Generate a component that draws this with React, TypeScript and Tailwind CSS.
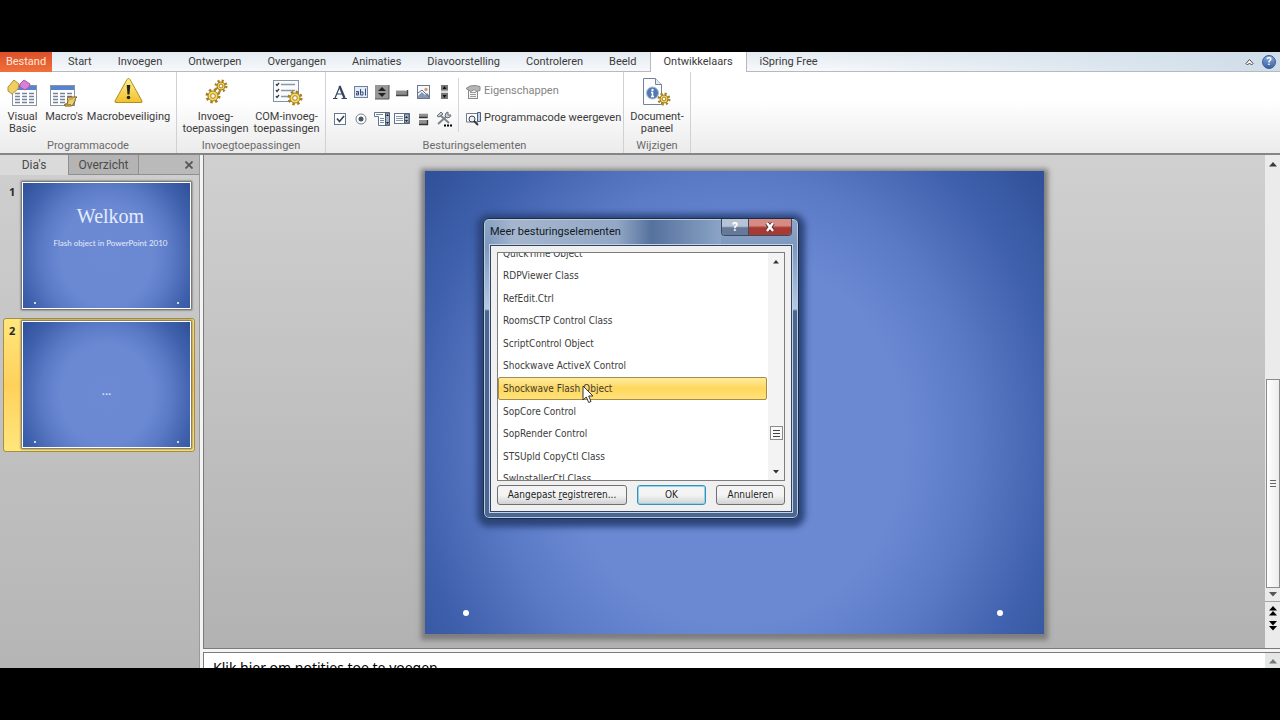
import { useState } from 'react';
import type { ReactNode } from 'react';

const ribbonTabs = [
  'Start',
  'Invoegen',
  'Ontwerpen',
  'Overgangen',
  'Animaties',
  'Diavoorstelling',
  'Controleren',
  'Beeld',
  'Ontwikkelaars',
  'iSpring Free',
];

const controls = [
  'QuickTime Object',
  'RDPViewer Class',
  'RefEdit.Ctrl',
  'RoomsCTP Control Class',
  'ScriptControl Object',
  'Shockwave ActiveX Control',
  'Shockwave Flash Object',
  'SopCore Control',
  'SopRender Control',
  'STSUpld CopyCtl Class',
  'SwInstallerCtl Class',
];

const slideBackground =
  'bg-[radial-gradient(65%_95%_at_50%_58%,#6c8ad4_0%,#6b89d3_42%,#5b7ac6_60%,#3f60ac_80%,#2e4f96_100%)]';

/* ---------- Icons ---------- */

const Gear = ({ x, y, r }: { x: number; y: number; r: number }) => (
  <g transform={`translate(${x} ${y})`}>
    <circle r={r} fill="none" stroke="#a58022" strokeWidth="3" strokeDasharray={`${(r * Math.PI) / 8} ${(r * Math.PI) / 8}`} />
    <circle r={r - 1} fill="#f7da62" stroke="#a58022" strokeWidth="1" />
    <circle r={r / 2.6} fill="#fff" stroke="#a58022" strokeWidth="1" />
  </g>
);

const Sheet = ({ x, y }: { x: number; y: number }) => (
  <g transform={`translate(${x} ${y})`}>
    <rect x="0.5" y="0.5" width="24" height="20" fill="#fff" stroke="#8a95a3" />
    <rect x="1" y="1" width="23" height="4" fill="#5583cf" />
    <path d="M3 8.5h5M10 8.5h5M17 8.5h5M3 11.5h5M10 11.5h5M17 11.5h5M3 14.5h5M10 14.5h5M17 14.5h5M3 17.5h5M10 17.5h5M17 17.5h5" stroke="#75859c" strokeWidth="1.4" />
  </g>
);

const VisualBasicIcon = () => (
  <svg width="32" height="32" viewBox="0 0 32 32" aria-hidden="true">
    <Sheet x={5} y={7} />
    <path d="m1 9 6-7 5 4-1 5-6 5-4-3z" fill="#f0cf62" stroke="#b08f3a" />
    <path d="m13 6 4-4 6 4-1 3-4 3-5-3z" fill="#d87fd8" stroke="#a55ba6" />
  </svg>
);

const MacroIcon = () => (
  <svg width="32" height="32" viewBox="0 0 32 32" aria-hidden="true">
    <Sheet x={2} y={7} />
    <path d="M20 19h9q-2 1-2 4l-2 4q-1 1-3 1h-5q-1-1 0-2h2l1-3q-1-3 0-4z" fill="#eccd72" stroke="#735819" />
    <path d="M21 21h4M18 26.500h5" stroke="#b08a30" />
  </svg>
);

const WarningIcon = () => (
  <svg width="32" height="32" viewBox="0 0 32 32" aria-hidden="true">
    <defs>
      <linearGradient id="warn" x1="0" x2="0" y1="0" y2="1">
        <stop offset="0" stopColor="#fdf08e" />
        <stop offset="1" stopColor="#f3c02c" />
      </linearGradient>
    </defs>
    <path d="M15.500.5q1 0 1.500 1L29 23q.5 1.500-1 1.500H3q-1.500 0-1-1.500L14 1.500q.5-1 1.500-1z" fill="url(#warn)" stroke="#b08d1c" />
    <path d="M13.700 7h3.600l-.8 9.500h-2z" fill="#222" />
    <circle cx="15.500" cy="19.500" r="1.800" fill="#222" />
  </svg>
);

const GearsIcon = () => (
  <svg width="32" height="32" viewBox="0 0 32 32" aria-hidden="true">
    <Gear x={21} y={8} r={5} />
    <Gear x={13} y={18} r={6} />
  </svg>
);

const ComIcon = () => (
  <svg width="32" height="32" viewBox="0 0 32 32" aria-hidden="true">
    <rect x="2.500" y="2.500" width="25" height="21" fill="#fafbfd" stroke="#8492a6" />
    <path d="M10 6.500h14M10 12.500h14M10 18.500h8" stroke="#8b98ac" strokeWidth="1.500" />
    <path d="m5 6 1 1.500L8 5M5 12l1 1.500L8 11M5 18l1 1.500L8 17" fill="none" stroke="#333" strokeWidth="1.300" />
    <Gear x={24} y={20} r={6} />
  </svg>
);

const DocumentIcon = () => (
  <svg width="32" height="32" viewBox="0 0 32 32" aria-hidden="true">
    <path d="M2.500.5h12l6 6v20h-18z" fill="#fdfdfe" stroke="#75839a" />
    <path d="M14.500.5v6h6" fill="#e5ebf3" stroke="#75839a" />
    <circle cx="11.500" cy="15" r="6" fill="#5079b2" stroke="#a9bbd3" />
    <circle cx="11.500" cy="12" r="1.200" fill="#fff" />
    <path d="M10 14.500h1.500V18M10 18.500h3" stroke="#fff" strokeWidth="1.500" fill="none" />
    <Gear x={23} y={21} r={5} />
  </svg>
);

const PropertiesIcon = () => (
  <svg width="16" height="16" viewBox="0 0 16 16" aria-hidden="true">
    <rect x="2.500" y="4.500" width="9" height="10" fill="#f4f4f4" stroke="#8a8a8a" />
    <path d="M4 8.500h6M4 10.500h6M4 12.500h6" stroke="#999" />
    <path d="M0 4.500 4 2l5-.5 5 1v4l-4 1-2-2-3 2z" fill="#b5b5b5" stroke="#888" />
  </svg>
);

const CodeIcon = () => (
  <svg width="16" height="16" viewBox="0 0 16 16" aria-hidden="true">
    <path d="M.5 9V2.500H12V11H.5z" fill="#fff" stroke="#6c7b91" />
    <path d="M11.500 1.500h3v9h-3z" fill="#c3d1e8" stroke="#4a5f82" />
    <circle cx="6" cy="8" r="3" fill="#e8f0fa" stroke="#444" />
    <path d="m8 10 4 4" stroke="#333" strokeWidth="1.800" />
  </svg>
);

const toolIcons: { label: string; icon: ReactNode }[] = [
  {
    label: 'Label',
    icon: (
      <>
        <path d="M1 14.500h4.500M9.500 14.500H15M3 14 8 2M5 10h6" fill="none" stroke="#33435e" strokeWidth="1.200" />
        <path d="m7.500 2 5 12" stroke="#33435e" strokeWidth="2.200" />
      </>
    ),
  },
  {
    label: 'Tekstvak',
    icon: (
      <>
        <rect x="1.500" y="2.500" width="13" height="11" fill="#e3eaf6" stroke="#6c80a8" />
        <path d="M3 7.500h2.500V11H3.500V9h2M7.500 5v6h2.500V8H8M12.500 4.500v7" fill="none" stroke="#3b4d74" />
      </>
    ),
  },
  {
    label: 'Kringveld',
    icon: (
      <>
        <rect x="1" y="1" width="14" height="14" fill="#979797" />
        <path d="M1 15h14V1" fill="none" stroke="#555" />
        <path d="M4 7h8L8 3zM4 9h8l-4 4z" fill="#222" />
      </>
    ),
  },
  {
    label: 'Opdrachtknop',
    icon: (
      <>
        <path d="M2 6h12v6H2z" fill="#8d8d8d" />
        <path d="M2 11.500h11.500V6" fill="none" stroke="#444" strokeWidth="1.500" />
        <path d="M2 6.500h11" stroke="#ccc" />
      </>
    ),
  },
  {
    label: 'Afbeelding',
    icon: (
      <>
        <rect x="2.500" y="1.500" width="12" height="13" fill="#f6f9fd" stroke="#6e7787" />
        <path d="m3 12 4-4 3 3 2-2 2 2v3H3z" fill="#8796b1" />
        <path d="m3 9 4-3 7 7" fill="none" stroke="#5f7397" />
        <circle cx="11" cy="5.500" r="1.700" fill="#dc9c65" />
      </>
    ),
  },
  {
    label: 'Schuifbalk',
    icon: (
      <>
        <rect x="5" y="2" width="7" height="12" fill="#dcdcdc" />
        <path d="M5 1h7v5.500H5zM5 9h7v6H5z" fill="#777" />
        <path d="M6.500 5h4l-2-3zM6.500 11h4l-2 3z" fill="#111" />
      </>
    ),
  },
  {
    label: 'Selectievakje',
    icon: (
      <>
        <rect x="2.500" y="2.500" width="11" height="11" fill="#fff" stroke="#68788f" />
        <path d="m5 7.500 2.500 3L12 5" fill="none" stroke="#36465f" strokeWidth="1.700" />
      </>
    ),
  },
  {
    label: 'Keuzerondje',
    icon: (
      <>
        <circle cx="8" cy="8" r="5" fill="#fff" stroke="#777f8c" />
        <circle cx="8" cy="8" r="2.500" fill="#4d5460" />
      </>
    ),
  },
  {
    label: 'Keuzelijst met invoervak',
    icon: (
      <>
        <path d="M.5 1.500h15v13h-11v-9h-4z" fill="#fff" stroke="#65748a" />
        <path d="M2 3.500h7M6 7.500h4M6 9.500h4M6 11.500h4" stroke="#7088ac" />
        <path d="M11.500 2h4v12h-4z" fill="#a5b2c6" stroke="#4c5a70" />
        <path d="M12 5h3l-1.500-2zM12 11h3l-1.500 2z" fill="#222" />
      </>
    ),
  },
  {
    label: 'Keuzelijst',
    icon: (
      <>
        <rect x=".5" y="2.500" width="15" height="10" fill="#fff" stroke="#65748a" />
        <path d="M2 5.500h7M2 7.500h7M2 9.500h7" stroke="#8b9ab2" />
        <path d="M10.500 3h4.500v9h-4.500z" fill="#a5b2c6" stroke="#4c5a70" />
        <path d="M11 7h3l-1.500-2zM11 9h3l-1.500 2z" fill="#222" />
      </>
    ),
  },
  {
    label: 'Wisselknop',
    icon: (
      <>
        <path d="M4 2h9v5H4zM4 9h9v5H4z" fill="#909090" />
        <path d="M4 6.500h8.500M4 13.500h8.500V9" fill="none" stroke="#333" strokeWidth="1.300" />
        <path d="M4 2.500h9" stroke="#ddd" />
      </>
    ),
  },
  {
    label: 'Meer besturingselementen',
    icon: (
      <>
        <path d="m2 13 10-9M4 4l9 8" stroke="#7d858f" strokeWidth="2" />
        <path d="m1 5 4-4 2 2-4 3zM10 2l2-1v3h3l-1 2-3 1-2-2z" fill="#c9ced5" stroke="#666d78" />
        <path d="M8 14.500h2M11 14.500h2M14 14.500h2" stroke="#000" strokeWidth="2" />
      </>
    ),
  },
];

const Arrow = ({ down = false, color = '#3a3a3a' }: { down?: boolean; color?: string }) => (
  <svg width="8" height="5" viewBox="0 0 8 5" aria-hidden="true" className="shrink-0">
    <path d={down ? 'M0 0h8L4 4.500z' : 'M0 4.500h8L4 0z'} fill={color} />
  </svg>
);

const SmallArrow = ({ down = false }: { down?: boolean }) => (
  <svg width="6" height="4" viewBox="0 0 6 4" aria-hidden="true" className="shrink-0">
    <path d={down ? 'M0 0h6L3 3.500z' : 'M0 3.500h6L3 0z'} fill="#333" />
  </svg>
);

/* ---------- Ribbon ---------- */

const RibbonGroup = ({ title, width, children }: { title: string; width: string; children: ReactNode }) => (
  <section className={`flex shrink-0 flex-col border-r border-[#cfd1d4] ${width}`}>
    <div className="flex flex-1 items-start pt-[6px]">{children}</div>
    <h2 className="h-[15px] text-center leading-4 text-[#6a6a6a]">{title}</h2>
  </section>
);

const BigButton = ({ icon, lines, width }: { icon: ReactNode; lines: string[]; width: string }) => (
  <button type="button" className={`flex shrink-0 flex-col items-center whitespace-nowrap leading-3 ${width}`}>
    <span className="pb-px">{icon}</span>
    {lines.map((line) => (
      <span key={line}>{line}</span>
    ))}
  </button>
);

const Ribbon = () => (
  <header className="shrink-0 border-b-2 border-[#858585] text-[11px] text-[#3b3b3b]">
    <nav className="flex h-5 bg-gradient-to-b from-[#e3ebf1] to-[#f8f9fb]">
      <button type="button" className="w-[52px] bg-gradient-to-b from-[#dd4f29] to-[#f0703a] text-center text-[#ffe9dc]">
        Bestand
      </button>
      <div className="w-[3px] border-b border-[#b6babf]" />
      {ribbonTabs.map((tab) => (
        <button
          key={tab}
          type="button"
          className={`whitespace-nowrap px-[13px] pt-px ${
            tab === 'Ontwikkelaars' ? 'border-x border-[#b6babf] bg-white' : 'border-b border-[#b6babf]'
          }`}
        >
          {tab}
        </button>
      ))}
      <div className="flex flex-1 items-center justify-end gap-2 border-b border-[#b6babf] bg-gradient-to-r from-transparent to-[#cfdde9] pr-1">
        <button type="button" aria-label="Lint minimaliseren">
          <svg width="9" height="8" viewBox="0 0 9 8">
            <path d="M1 5.500 4.500 1.500 8 5.500 6.500 7 4.500 5 2.500 7z" fill="#fff" stroke="#444" />
          </svg>
        </button>
        <button
          type="button"
          aria-label="Help"
          className="size-[14px] rounded-full border border-[#39598f] bg-gradient-to-b from-[#86a5d8] to-[#3d62a5] font-bold leading-3 text-white"
        >
          ?
        </button>
      </div>
    </nav>

    <div className="flex h-[81px] bg-gradient-to-b from-white from-35% to-[#ebebeb]">
      <RibbonGroup title="Programmacode" width="w-[177px]">
        <BigButton icon={<VisualBasicIcon />} lines={['Visual', 'Basic']} width="w-[45px]" />
        <BigButton icon={<MacroIcon />} lines={["Macro's"]} width="w-[38px]" />
        <BigButton icon={<WarningIcon />} lines={['Macrobeveiliging']} width="w-[91px]" />
      </RibbonGroup>
      <RibbonGroup title="Invoegtoepassingen" width="w-[149px]">
        <BigButton icon={<GearsIcon />} lines={['Invoeg-', 'toepassingen']} width="w-[77px]" />
        <BigButton icon={<ComIcon />} lines={['COM-invoeg-', 'toepassingen']} width="w-[65px]" />
      </RibbonGroup>
      <RibbonGroup title="Besturingselementen" width="w-[298px]">
        <div className="ml-1 flex h-[54px] w-[129px] shrink-0 border-r border-[#d4d6d8]">
          <div className="grid w-[124px] grid-cols-6 place-items-center">
            {toolIcons.map(({ label, icon }) => (
              <button key={label} type="button" aria-label={label}>
                <svg width="16" height="16" viewBox="0 0 16 16">
                  {icon}
                </svg>
              </button>
            ))}
          </div>
        </div>
        <div className="flex h-[54px] flex-col justify-around pl-[7px]">
          <button type="button" className="flex items-center gap-[2px] whitespace-nowrap text-[#858585]">
            <PropertiesIcon />
            Eigenschappen
          </button>
          <button type="button" className="flex items-center gap-[2px] whitespace-nowrap">
            <CodeIcon />
            Programmacode weergeven
          </button>
        </div>
      </RibbonGroup>
      <RibbonGroup title="Wijzigen" width="w-[67px]">
        <BigButton icon={<DocumentIcon />} lines={['Document-', 'paneel']} width="w-[66px]" />
      </RibbonGroup>
    </div>
  </header>
);

/* ---------- Slides panel ---------- */

const Thumbnail = ({ number, active, children }: { number: number; active?: boolean; children: ReactNode }) => (
  <li
    className={`flex h-[134px] rounded-[3px] border p-[2px] ${
      active ? 'border-[#a58f45] bg-gradient-to-b from-[#ffe67c] via-[#ffd15c] to-[#ffe67c]' : 'border-transparent'
    }`}
  >
    <span className="w-4 pl-[3px] pt-[2px] font-['Noto_Sans'] text-[11px] font-bold leading-4 text-[#2b2b2b]">{number}</span>
    <div className={`flex h-[127px] w-[169px] flex-col items-center border border-white text-[#e4ecfb] shadow-[0_0_2px_1px_#555] ${slideBackground}`}>
      {children}
      <div className="mb-1 mt-auto flex w-full justify-between px-[11px]">
        <span className="size-[2px] rounded-full bg-white" />
        <span className="size-[2px] rounded-full bg-white" />
      </div>
    </div>
  </li>
);

const SlidesPanel = () => (
  <aside className="flex w-[200px] shrink-0 flex-col border-r border-[#9a9a9a] bg-gradient-to-b from-[#cfcfcf] to-[#b5b5b5]">
    <div className="flex h-5 text-xs text-[#4b4b4b]">
      <button type="button" className="w-[68px] bg-[#dadada] leading-5">
        Dia's
      </button>
      <button type="button" className="w-[71px] border border-t-0 border-[#8f8f8f] bg-[#b4b4b4] leading-4">
        Overzicht
      </button>
      <div className="flex flex-1 items-center justify-end border-b border-[#8f8f8f] bg-[#bababa] pr-[6px]">
        <button type="button" aria-label="Sluiten">
          <svg width="8" height="8" viewBox="0 0 8 8">
            <path d="m.5.5 7 7M7.500.5l-7 7" stroke="#555" strokeWidth="1.800" />
          </svg>
        </button>
      </div>
    </div>
    <ol className="flex flex-col gap-[5px] pl-[3px] pr-1 pt-[4px]">
      <Thumbnail number={1}>
        <p className="pl-2 pt-[21px] font-['Liberation_Serif',serif] text-xl leading-6">Welkom</p>
        <p className="whitespace-nowrap pl-2 pt-[7px] font-['Lato',sans-serif] text-[8px] leading-4">Flash object in PowerPoint 2010</p>
      </Thumbnail>
      <Thumbnail number={2} active>
        <p className="pt-[61px] font-['Noto_Sans',sans-serif] text-xs leading-4">...</p>
      </Thumbnail>
    </ol>
  </aside>
);

/* ---------- Dialog ---------- */

const dialogButton =
  "h-[20px] rounded-[3px] border bg-gradient-to-b from-[#f4f4f4] from-50% to-[#d2d2d2] font-['DejaVu_Sans_Condensed','DejaVu_Sans',sans-serif] text-[10px] leading-4 text-[#1d1d1d]";

const ControlsDialog = () => {
  const [selected, setSelected] = useState('Shockwave Flash Object');

  return (
    <div
      role="dialog"
      aria-labelledby="dialog-title"
      className="absolute left-[58px] top-[47px] flex h-[301px] w-[316px] flex-col rounded-md border border-[#1f2c44] bg-[linear-gradient(to_bottom,#8ea6c8_0px,#7e98bd_28px,#b5c9e4_90px,#4c6690_92px,#4d6793_100%)] px-[6px] pb-[6px] text-[#3c3c3c] shadow-[inset_0_0_0_1px_#b9cbe2,0_2px_6px_6px_#2b457b]"
    >
      <div className="flex h-[26px] shrink-0 items-start justify-between">
        <h1
          id="dialog-title"
          className="mt-px flex-1 bg-[linear-gradient(to_right,transparent_0%,#a5b5cd_10%,#93a8c6_55%,#55719d_70%,#8ba4c6_100%)] text-[11px] leading-6 text-[#141a24]"
        >
          Meer besturingselementen
        </h1>
        <div className="flex h-[17px] overflow-hidden rounded-b border border-t-0 border-[#3a4b68] text-white">
          <button type="button" aria-label="Help" className="w-[26px] bg-gradient-to-b from-[#b6c3d5] from-45% to-[#667a98] to-55% text-xs font-bold leading-4">
            ?
          </button>
          <button
            type="button"
            aria-label="Sluiten"
            className="flex w-[43px] items-center justify-center border-l border-[#3a4b68] bg-gradient-to-b from-[#d68c85] from-40% to-[#a83a33] to-55%"
          >
            <svg width="12" height="10" viewBox="0 0 12 10">
              <path d="m3 1 6 8M9 1 3 9" stroke="#4d2a30" strokeWidth="4" />
              <path d="m3 1 6 8M9 1 3 9" stroke="#fff" strokeWidth="2.400" />
            </svg>
          </button>
        </div>
      </div>

      <div className="flex flex-1 flex-col border border-[#33435f] bg-[#f0f0f0] px-[6px] pt-[6px] shadow-[0_0_0_1px_#c3d3e8]">
        <div className="flex h-[229px] overflow-hidden border border-[#7d7d7d] bg-white">
          <ul
            role="listbox"
            aria-label="Besturingselementen"
            className="-mt-[11px] grid h-[248px] flex-1 auto-rows-fr font-['DejaVu_Sans_Condensed','DejaVu_Sans',sans-serif] text-[10px]"
          >
            {controls.map((control) => (
              <li key={control} role="option" aria-selected={control === selected} className="flex">
                <button
                  type="button"
                  onClick={() => setSelected(control)}
                  className={`flex-1 rounded-[2px] border px-1 text-left ${
                    control === selected
                      ? 'border-[#a78d43] bg-gradient-to-b from-[#fdeb9c] via-[#ffd75b] to-[#ffe27c]'
                      : 'border-transparent'
                  }`}
                >
                  {control}
                </button>
              </li>
            ))}
          </ul>
          <div className="ml-px flex w-4 flex-col items-center bg-[#f3f3f3] pb-[6px] pt-[7px]">
            <SmallArrow />
            <div className="mt-auto flex h-[14px] w-[13px] flex-col items-center justify-center gap-[2px] border border-[#8b8b8b] bg-[#f8f8f8]">
              <span className="h-px w-[7px] bg-[#444]" />
              <span className="h-px w-[7px] bg-[#444]" />
              <span className="h-px w-[7px] bg-[#444]" />
            </div>
            <div className="mt-[30px]">
              <SmallArrow down />
            </div>
          </div>
        </div>
        <div className="flex justify-between pt-1">
          <button type="button" className={`${dialogButton} w-[130px] border-[#707070]`}>
            Aangepast <u>r</u>egistreren...
          </button>
          <div className="flex gap-[10px]">
            <button type="button" className={`${dialogButton} w-[69px] border-[#3c8fb5] shadow-[inset_0_0_0_1px_#8fd4ee]`}>
              OK
            </button>
            <button type="button" className={`${dialogButton} w-[69px] border-[#707070]`}>
              Annuleren
            </button>
          </div>
        </div>
      </div>

      <svg width="12" height="19" viewBox="0 0 12 19" aria-hidden="true" className="absolute left-[98px] top-[166px]">
        <path d="M1 1v14l3.300-3 2.400 5.500 2.300-1L6.700 11H11z" fill="#fff" stroke="#333" />
      </svg>
    </div>
  );
};

/* ---------- Workspace ---------- */

const Workspace = () => (
  <main className="flex min-w-0 flex-1 flex-col border-l-[3px] border-[#f4f4f4]">
    <div className="flex min-h-0 flex-1 border-b border-l border-[#7b7b7b]">
      <div className="flex min-w-0 flex-1 items-center justify-center bg-gradient-to-b from-[#d0d0d0] to-[#b2b2b2] pb-[14px] pt-4">
        <div className={`relative flex aspect-[619/463] h-full items-end shadow-[0_2px_5px_4px_#7d7d7d] ${slideBackground}`}>
          <div className="flex w-full justify-between pb-[18px] pl-[38px] pr-[41px]">
            <span className="size-[6px] rounded-full bg-white" />
            <span className="size-[6px] rounded-full bg-white" />
          </div>
          <ControlsDialog />
        </div>
      </div>
      <div className="flex w-[15px] shrink-0 flex-col items-center bg-[#ebebeb] pt-[7px]">
        <Arrow />
        <div className="mt-auto flex h-[209px] w-[14px] flex-col items-center justify-center gap-[2px] border border-[#8b8b8b] bg-gradient-to-r from-white to-[#ececec]">
          <span className="h-px w-[6px] bg-[#666]" />
          <span className="h-px w-[6px] bg-[#666]" />
          <span className="h-px w-[6px] bg-[#666]" />
        </div>
        <div className="flex h-[14px] w-full items-center justify-center border-b border-[#a5a5a5]">
          <Arrow down color="#555" />
        </div>
        <div className="flex flex-col items-center pb-[17px] pt-1">
          <Arrow color="#000" />
          <Arrow color="#000" />
          <div className="h-[5px]" />
          <Arrow down color="#000" />
          <Arrow down color="#000" />
        </div>
      </div>
    </div>
    <div className="mt-[3px] flex h-4 shrink-0 overflow-hidden border-l border-t border-[#7b7b7b] bg-white">
      <p className="flex-1 whitespace-nowrap pl-[9px] pt-[5px] font-['Noto_Sans',sans-serif] text-sm leading-5 text-black">
        Klik hier om notities toe te voegen
      </p>
      <div className="flex w-[15px] justify-center bg-[#e4e7e6] pt-[6px]">
        <Arrow color="#777" />
      </div>
    </div>
  </main>
);

const App = () => (
  <div className="flex h-screen flex-col overflow-hidden bg-black py-[52px] font-['Roboto',sans-serif]">
    <Ribbon />
    <div className="flex min-h-0 flex-1 bg-[#f4f4f4]">
      <SlidesPanel />
      <Workspace />
    </div>
  </div>
);

export default App;
